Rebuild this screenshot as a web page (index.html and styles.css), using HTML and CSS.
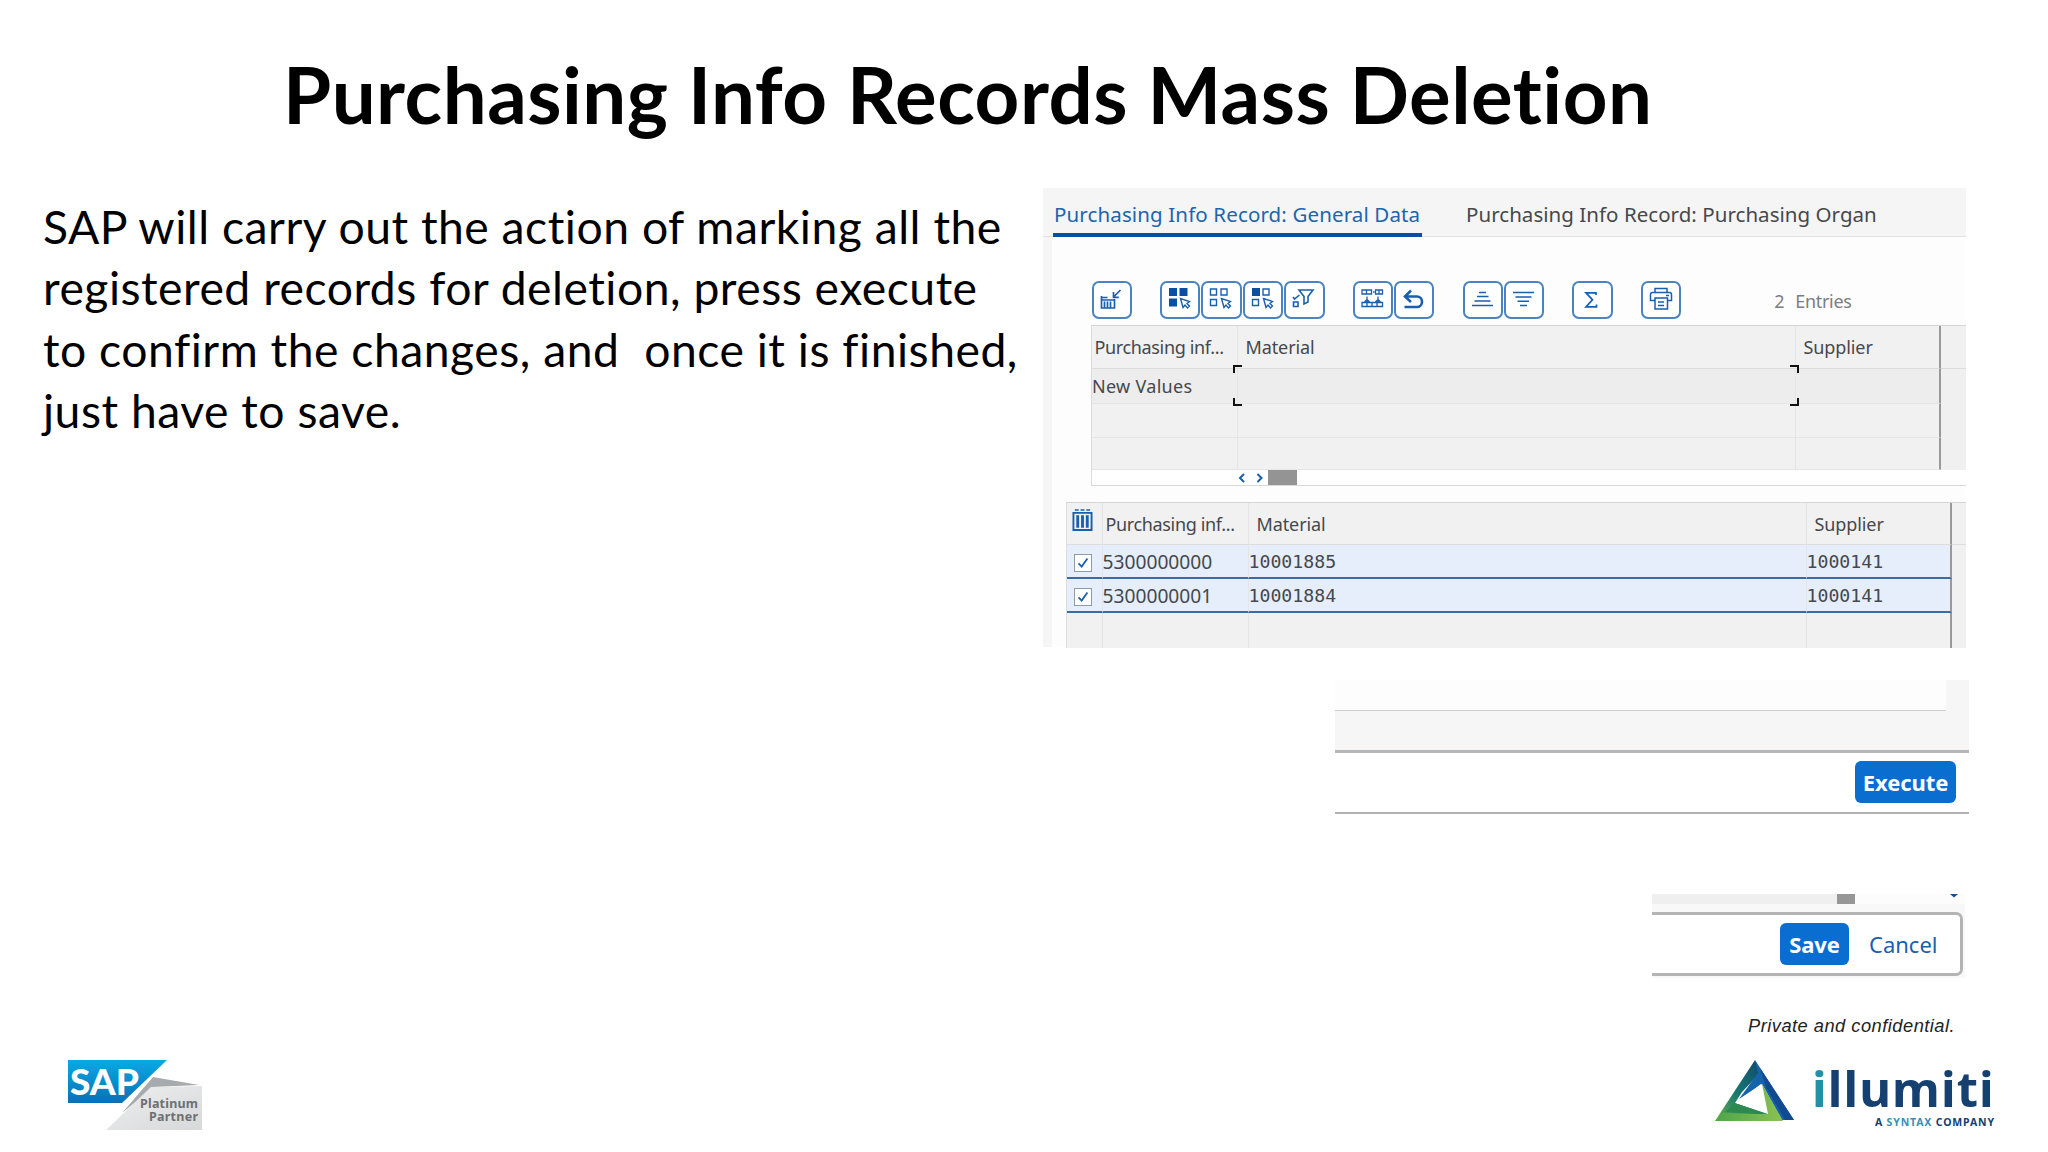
FILE: index.html
```html
<!DOCTYPE html>
<html lang="en">
<head>
<meta charset="utf-8">
<title>Purchasing Info Records Mass Deletion</title>
<link rel="stylesheet" href="styles.css">
</head>
<body>
<h1 class="title">Purchasing Info Records Mass Deletion</h1>
<main class="content">
  <p class="lead">SAP will carry out the action of marking all the<br>registered records for deletion, press execute<br>to confirm the changes, and&nbsp; once it is finished,<br>just have to save.</p>
  <div class="shots">
    <section class="records">
      <nav class="tabs"><span class="tab active">Purchasing Info Record: General Data</span><span class="tab">Purchasing Info Record: Purchasing Organ</span></nav>
      <div class="pane">
        <div class="toolbar">
          <div class="group">
            <span class="btn"><svg viewBox="0 0 40 37"><path d="M9.500 15v12h13v-9M9.500 16.500h6M12.500 20.500v6M15.500 20.500v6M18.500 20.500v6M10 19h12" stroke-width="1.7"/><path d="M28.500 9l-7 7M21.500 11v5.300h5.300" stroke-width="1.700"/></svg></span>
          </div>
          <div class="group">
            <span class="btn"><svg viewBox="0 0 40 37"><path class="fill" d="M9 7h8v8h-8zM19.500 7h8v8h-8zM9 17.500h8v8h-8z"/><path d="M20.500 17.500l2.500 9 2-2.500 2.500 3 2-2-2.500-2.500 2.500-2z" stroke-width="1.4"/></svg></span>
            <span class="btn"><svg viewBox="0 0 40 37"><path d="M9.500 8h6v6h-6zM20 8h6v6h-6zM9.500 18.500h6v6h-6zM20.500 17.500l2.500 9 2-2.500 2.500 3 2-2-2.500-2.500 2.500-2z" stroke-width="1.4"/></svg></span>
            <span class="btn"><svg viewBox="0 0 40 37"><path class="fill" d="M9 7h8v8h-8z"/><path d="M20 8h6v6h-6zM9.500 18.500h6v6h-6zM20.500 17.500l2.500 9 2-2.500 2.500 3 2-2-2.500-2.500 2.500-2z" stroke-width="1.4"/></svg></span>
            <span class="btn"><svg viewBox="0 0 40 37"><path d="M15 9h14l-5 6.500v5.500l-4 2v-7.500zM9.500 21h4.500v4.500h-4.500zM9 16l1.500 2 5-4" stroke-width="1.6"/></svg></span>
          </div>
          <div class="group">
            <span class="btn"><svg viewBox="0 0 40 37"><path d="M9 9h9.500v4h-9.500zM13.500 9v4M22.500 9h7v4h-7zM26 9v4M20 11h1.500M9 21.500h20.500v4h-20.500zM14 21.500v4M19 21.500v4M24 21.500v4M14 15.500v6M25 15.500v6M11.500 21l2.500-2.500 2.500 2.500M22.500 21l2.500-2.500 2.500 2.500" stroke-width="1.3"/></svg></span>
            <span class="btn"><svg viewBox="0 0 40 37"><path d="M10.500 26h12.500a5 5 0 0 0 5-5v-.5a5 5 0 0 0-5-5h-11.500M17 9.500l-6 6 6 5.500" stroke-width="2.600"/></svg></span>
          </div>
          <div class="group">
            <span class="btn"><svg viewBox="0 0 40 37"><path d="M16 11.500h7M14 15.500h11.500M11.500 20h16M9 24.500h21" stroke-width="1.6"/></svg></span>
            <span class="btn"><svg viewBox="0 0 40 37"><path d="M9 11.500h21M11.500 16h16M13.500 20.300h11.500M16 24.500h7" stroke-width="1.6"/></svg></span>
          </div>
          <div class="group">
            <span class="btn"><svg viewBox="0 0 40 37"><path d="M24 14v-2.200h-10l6.500 7-6.500 7h10.500v-2.200" stroke-width="1.7"/></svg></span>
          </div>
          <div class="group">
            <span class="btn"><svg viewBox="0 0 40 37"><path d="M14 11.500v-4h12v4M13.500 19.500h-4v-6q0-2 2-2h17q2 0 2 2v6h-4M14 17h12.500v11h-12.500zM17 21h6M17 24.500h6M25 14.500h3" stroke-width="1.5"/></svg></span>
          </div>
          <span class="entries"><span>2</span><span>Entries</span></span>
        </div>
        <div class="grid upper">
          <div class="row head"><span class="c"><span class="tight">Purchasing inf...</span></span><span class="c">Material</span><span class="c">Supplier</span><span class="c end"></span></div>
          <div class="row r1"><span class="c">New Values</span><span class="c focus"><i class="tl"></i><i class="tr"></i><i class="bl"></i><i class="br"></i></span><span class="c"></span><span class="c end"></span></div>
          <div class="row r2"><span class="c"></span><span class="c"></span><span class="c"></span><span class="c end"></span></div>
          <div class="row r3"><span class="c"></span><span class="c"></span><span class="c"></span><span class="c end"></span></div>
          <div class="scroll"><svg viewBox="0 0 26 12"><path d="M6 2L2 6l4 4M19.500 2l4 4-4 4" stroke-width="2"/></svg><b></b></div>
        </div>
        <div class="grid lower">
          <div class="row head"><span class="c"><svg class="cols" viewBox="0 0 22 24"><path d="M3 1.500h4M9 1.500h4M15 1.500h4" stroke-width="1.600"/><path d="M1.500 4.500h19v18h-19z" stroke-width="2"/><path d="M6 7v13M11 7v13M16 7v13" stroke-width="3"/></svg></span><span class="c"><span class="tight">Purchasing inf...</span></span><span class="c">Material</span><span class="c">Supplier</span><span class="c end"></span></div>
          <div class="row sel"><span class="c"><svg class="check" viewBox="0 0 18 18"><path d="M4 9.500l3.500 3.500 6.500-9" stroke-width="2"/></svg></span><span class="c n">5300000000</span><span class="c m">10001885</span><span class="c m">1000141</span><span class="c end"></span></div>
          <div class="row sel"><span class="c"><svg class="check" viewBox="0 0 18 18"><path d="M4 9.500l3.500 3.500 6.500-9" stroke-width="2"/></svg></span><span class="c n">5300000001</span><span class="c m">10001884</span><span class="c m">1000141</span><span class="c end"></span></div>
          <div class="row last"><span class="c"></span><span class="c"></span><span class="c"></span><span class="c"></span><span class="c end"></span></div>
        </div>
      </div>
    </section>
    <section class="execute">
      <div class="above"><div class="sheet"></div></div>
      <div class="bar"><span class="primary">Execute</span></div>
    </section>
    <section class="save">
      <div class="strip"><b></b><svg viewBox="0 0 8 4"><path class="fill" d="M0 0h8l-4 3.500z"/></svg></div>
      <div class="dialog"><span class="primary">Save</span><span class="cancel">Cancel</span></div>
    </section>
  </div>
</main>
<footer class="footer">
  <svg class="sap" viewBox="0 0 137 74">
    <defs>
      <linearGradient id="sapBlue" x1="0" y1="0" x2="0" y2="1"><stop offset="0" stop-color="#08a9e4"/><stop offset="1" stop-color="#0b70b8"/></linearGradient>
      <linearGradient id="silver" x1="0" y1="0" x2="1" y2="1"><stop offset="0" stop-color="#efefef"/><stop offset="1" stop-color="#d6d8d9"/></linearGradient>
    </defs>
    <path d="M2 43L54 53 85 17l46 8-45 2-32 26z" fill="#a7abae"/>
    <path d="M38 70L83 27l51-1v44z" fill="url(#silver)"/>
    <path d="M0 0h99L54 43H0z" fill="url(#sapBlue)"/>
    <text x="2" y="34.500" class="saptext" textLength="69" lengthAdjust="spacingAndGlyphs">SAP</text>
    <text x="72" y="48" class="partner" textLength="58">Platinum</text>
    <text x="81" y="61" class="partner" textLength="49">Partner</text>
  </svg>
  <div class="brand">
    <p class="private">Private and confidential.</p>
    <div class="illumiti">
      <svg class="mark" viewBox="0 0 80 62">
        <defs><linearGradient id="tealGreen" x1="1" y1="0" x2="0" y2="1"><stop offset="0" stop-color="#12406f"/><stop offset=".55" stop-color="#15766f"/><stop offset="1" stop-color="#68b244"/></linearGradient>
        <linearGradient id="lime" x1="0" y1="0" x2="1" y2="0"><stop offset="0" stop-color="#4ea548"/><stop offset="1" stop-color="#8cc152"/></linearGradient></defs>
        <path d="M40 0L0 61 54 55 20 43 27 32 46 12z" fill="url(#tealGreen)"/>
        <path d="M40 0L79 60H67L47 24 24 39 43 13z" fill="#1463ab"/>
        <path d="M45 8L79 60H70L51 27z" fill="#124a91"/>
        <path d="M0 61L8 53 53 54 47 24 68 61z" fill="url(#lime)"/>
        <path d="M10 52L20 43 53 54z" fill="#2c8a50"/>
        <path d="M21 43L46 24 52 53z" fill="#fff"/>
      </svg>
      <div class="word"><span class="name"><em>i</em>llumiti</span><span class="sub">A <em>SYNTAX</em> COMPANY</span></div>
    </div>
  </div>
</footer>
</body>
</html>
```

FILE: styles.css
```css
* { box-sizing: border-box; }
body { margin: 0; width: 2048px; height: 1152px; overflow: hidden; background: #fff; display: flex; flex-direction: column; font-family: "Noto Sans", sans-serif; color: #45484c; }
svg { display: block; fill: none; stroke: #1a5fae; }
svg .fill { fill: #0a4fa0; stroke: none; }
.title { margin: 0; padding: 44px 0 0 283px; height: 188px; font: 700 78px/100px Lato, sans-serif; letter-spacing: .5px; color: #000; white-space: nowrap; }
.content { display: flex; height: 812px; }
.lead { margin: 0; padding: 8px 0 0 43px; width: 1043px; font: 400 46.300px/61.4px Lato, sans-serif; letter-spacing: .5px; color: #000; white-space: nowrap; }
.shots { display: flex; flex-direction: column; flex: 1; align-items: flex-start; }

.records { width: 923px; height: 459px; background: #f5f5f5; }
.tabs { display: flex; gap: 43px; height: 49px; padding-left: 10px; border-bottom: 1.500px solid #e2e2e2; font-size: 20.500px; white-space: nowrap; }
.tab { height: 49px; line-height: 53px; padding: 0 1px; letter-spacing: .04px; }
.tab.active { color: #2064ae; border-bottom: 4px solid #0a4f9f; width: 369px; letter-spacing: .13px; }
.pane { margin-left: 9px; background: #fdfdfd; height: 410px; padding-top: 44px; }
.toolbar { display: flex; align-items: center; gap: 28.200px; padding-left: 39.500px; height: 38px; }
.group { display: flex; gap: 1.300px; }
.btn { width: 40.200px; height: 37.500px; border: 2px solid #4a83c0; border-radius: 7px; background: #fff; }
.btn svg { width: 40px; height: 37px; margin: -2px; }
.entries { display: flex; gap: 11px; margin-left: 65px; font-size: 18px; line-height: 26px; padding-top: 1px; letter-spacing: -.3px; color: #7b7e81; }

.grid { border-left: 1px solid #dcdcdc; border-top: 1px solid #d5d5d5; font-size: 18px; white-space: nowrap; }
.upper { margin: 6px 0 0 39px; height: 161px; border-bottom: 1px solid #d9d9d9; background: #fff; }
.lower { margin: 16px 0 0 14px; height: 146px; }
.row { display: grid; grid-template-rows: 100%; }
.upper .row { grid-template-columns: 145.500px 558px 145.500px 1fr; }
.lower .row { grid-template-columns: 35.500px 146px 558px 145.500px 1fr; }
.c { position: relative; background: #f1f1f1; border-right: 1px solid #e5e5e5; border-bottom: 1px solid #e5e5e5; }
.c:nth-last-child(2) { border-right: 2px solid #999; }
.c.end { border-right: 0; }
.head { height: 43px; line-height: 33px; letter-spacing: -.1px; }
.tight { letter-spacing: -.35px; }
.head .c { padding: 5px 0 0 8px; border-bottom-color: #ddd; }
.upper .head .c:first-child { padding-left: 2.500px; }
.r1 { height: 34.500px; line-height: 34px; letter-spacing: .3px; }
.r1 .c { background: #ededed; }
.r2 { height: 34.500px; }
.r3 { height: 31.500px; }
.r2 .end, .r3 .end, .r1 .end { background: #f0f0f0; border-bottom-color: transparent; }
.focus { z-index: 1; }
.focus i { position: absolute; width: 9px; height: 8px; border: 0 solid #111; }
.focus .tl { left: -4.500px; top: -4px; border-width: 2px 0 0 2px; }
.focus .tr { right: -4px; top: -4px; border-width: 2px 2px 0 0; }
.focus .bl { left: -4.500px; bottom: -3px; border-width: 0 0 2px 2px; }
.focus .br { right: -4px; bottom: -3px; border-width: 0 2px 2px 0; }
.scroll { display: flex; align-items: center; gap: 4px; height: 16px; padding-left: 146px; }
.scroll svg { width: 26px; height: 12px; }
.scroll b { width: 28.500px; height: 15px; background: #949494; }
.lower .head { height: 42px; line-height: 32px; }
.lower .head .c:first-child { padding: 5px 0 0 5px; }
.lower .head .c:nth-child(2) { padding-left: 3px; }
.sel { height: 34px; line-height: 32px; }
.sel .c { background: #e5eefa; border-bottom: 2px solid #3a6ba3; padding-top: 1px; }
.sel .c.end { background: #f1f1f1; border-bottom-color: transparent; }
.sel .c:first-child { padding: 9px 0 0 7px; }
.cols { width: 21px; height: 24px; }
.check { width: 18px; height: 18px; border: 1.500px solid #8d9bab; background: #fff; }
.n { font-size: 19.200px; line-height: 31px; }
.m { font: 18.200px/31px "DejaVu Sans Mono", monospace; }
.last { height: 35px; }
.last .c { border-bottom: 0; }

.execute { margin: 33px 0 0 292px; width: 634px; height: 134px; border-bottom: 2.500px solid #b0b2b3; display: flex; flex-direction: column; }
.above { height: 73px; background: #f6f6f6; border-bottom: 3px solid #b4b6b7; }
.sheet { width: 611px; height: 31px; background: #fdfdfd; border-bottom: 1px solid #cfcfcf; }
.bar { flex: 1; display: flex; justify-content: flex-end; padding: 8px 13px 0 0; }
.primary { display: flex; align-items: center; justify-content: center; width: 101px; height: 42px; border-radius: 6px; background: #0a6ed1; color: #fff; font-weight: 700; font-size: 22px; line-height: 40px; padding-bottom: 1px; letter-spacing: -.1px; }
.save { margin: 80px 0 0 609px; width: 313px; height: 84px; background: #f8f8f8; }
.strip { display: flex; height: 10px; background: linear-gradient(90deg, #efefef 185px, #fcfcfc 185px); padding-left: 185px; gap: 95px; }
.strip b { width: 18px; height: 10px; background: #969696; }
.strip svg { width: 8px; height: 4px; }
.dialog { display: flex; align-items: center; gap: 20px; margin-top: 8px; width: 311px; height: 64px; background: #fff; border: 3px solid #b4b4b4; border-left: 0; border-radius: 0 7px 7px 0; padding-left: 128px; }
.dialog .primary { width: 69px; }
.cancel { font-size: 22px; line-height: 40px; padding-bottom: 1px; color: #1a5fae; }

.footer { display: flex; justify-content: space-between; height: 152px; }
.sap { width: 137px; height: 74px; margin: 60px 0 0 68px; stroke: none; }
.saptext { font: 900 36px Lato, sans-serif; fill: #fff; }
.partner { font: 700 12.500px "Noto Sans", sans-serif; fill: #6c7074; }
.brand { width: 340px; display: flex; flex-direction: column; }
.private { margin: 0; padding: 14px 0 0 40px; height: 60px; font: italic 18.300px/24px "Liberation Sans", sans-serif; letter-spacing: .48px; color: #222; white-space: nowrap; }
.illumiti { display: flex; gap: 17px; padding-left: 7px; }
.mark { width: 80px; height: 62px; stroke: none; }
.word { display: flex; flex-direction: column; color: #15406f; white-space: nowrap; }
.name { font: 700 49px/56px "Noto Sans", sans-serif; letter-spacing: 1.100px; }
.name em { font-style: normal; color: #2291a5; }
.sub { font: 700 10.500px/13px "Noto Sans", sans-serif; letter-spacing: .85px; align-self: flex-end; }
.sub em { font-style: normal; color: #3a8fb5; }
```
